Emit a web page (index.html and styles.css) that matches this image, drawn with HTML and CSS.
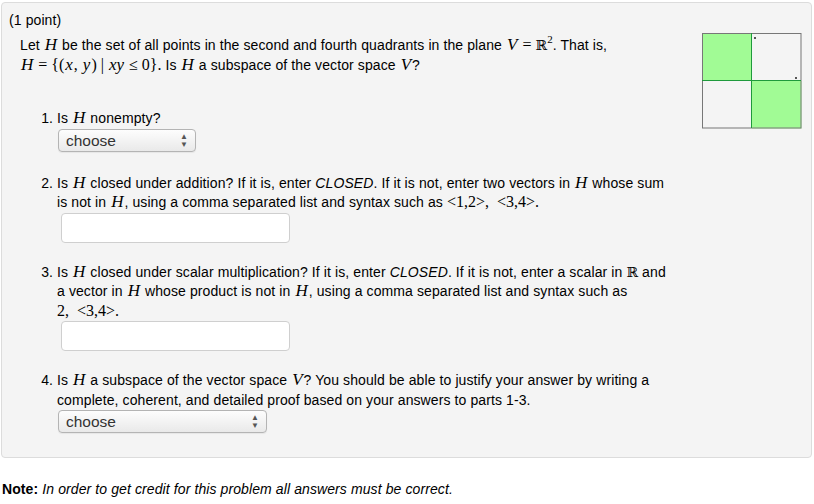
FILE: index.html
```html
<!DOCTYPE html>
<html>
<head>
<meta charset="utf-8">
<link rel="stylesheet" href="styles.css">
</head>
<body>
<div class="problem">
  <div class="points">(1 point)</div>
  <div class="intro">
    <svg class="graph" width="100" height="96" viewBox="0 0 100 96">
      <rect x="0.5" y="0.5" width="49" height="47" fill="#a1fb95"/>
      <rect x="50" y="48" width="49.5" height="47.5" fill="#a1fb95"/>
      <rect x="0.5" y="0.5" width="98.5" height="94.5" fill="none" stroke="#777" stroke-width="1"/>
      <line x1="49.5" y1="0" x2="49.5" y2="95" stroke="#1f9a3c" stroke-width="1"/>
      <line x1="0" y1="47.5" x2="99" y2="47.5" stroke="#1f9a3c" stroke-width="1"/>
      <rect x="52" y="4" width="2" height="2" fill="#555"/>
      <rect x="93" y="44" width="2" height="2" fill="#555"/>
    </svg>
    <p>Let <span class="m">H</span> be the set of all points in the second and fourth quadrants in the plane <span class="m">V</span> <span class="r">=</span> <span class="bb">ℝ</span><sup class="r">2</sup>. That is,<br>
    <span class="m">H</span> <span class="r">= {(</span><span class="m">x</span><span class="r">,</span> <span class="m">y</span><span class="r">) | </span><span class="m">xy</span> <span class="r">≤ 0}.</span> Is <span class="m">H</span> a subspace of the vector space <span class="m">V</span>?</p>
  </div>
  <ol class="parts">
    <li>Is <span class="m">H</span> nonempty?<br>
      <div class="select"><span class="sel-text">choose</span><span class="arrows">▲<br>▼</span></div>
    </li>
    <li>Is <span class="m">H</span> closed under addition? If it is, enter <i>CLOSED</i>. If it is not, enter two vectors in <span class="m">H</span> whose sum<br>is not in <span class="m">H</span>, using a comma separated list and syntax such as <span class="r">&lt;1,2&gt;,&nbsp; &lt;3,4&gt;.</span><br>
      <div class="input"></div>
    </li>
    <li>Is <span class="m">H</span> closed under scalar multiplication? If it is, enter <i>CLOSED</i>. If it is not, enter a scalar in <span class="bb">ℝ</span> and<br>a vector in <span class="m">H</span> whose product is not in <span class="m">H</span>, using a comma separated list and syntax such as<br><span class="r">2,&nbsp; &lt;3,4&gt;.</span><br>
      <div class="input"></div>
    </li>
    <li>Is <span class="m">H</span> a subspace of the vector space <span class="m">V</span>? You should be able to justify your answer by writing a<br>complete, coherent, and detailed proof based on your answers to parts 1-3.<br>
      <div class="select wide"><span class="sel-text">choose</span><span class="arrows">▲<br>▼</span></div>
    </li>
  </ol>
</div>
<p class="note"><b>Note:</b> <i>In order to get credit for this problem all answers must be correct.</i></p>
</body>
</html>
```
FILE: styles.css
```css
html, body {
  margin: 0;
  padding: 0;
  background: #fff;
}
body {
  font-family: "Liberation Sans", Arial, sans-serif;
  font-size: 14px;
  color: #000;
  padding: 2px 2px 0 1px;
  letter-spacing: 0.1px;
}
.problem {
  background: #f4f4f4;
  border: 1px solid #dcdcdc;
  border-radius: 4px;
  padding: 8px 7px 22px 7px;
  height: 424px;
}
.points {
  line-height: 19px;
}
.intro {
  margin-left: 11px;
}
.intro p {
  margin: 6px 0 0 0;
  line-height: 19.5px;
}
.graph {
  float: right;
  margin: -3px 2px 0 0;
  display: block;
}
.m {
  font-family: "Liberation Serif", "DejaVu Serif", serif;
  font-style: italic;
  font-size: 17px;
  line-height: 1;
  padding: 0 1px;
  letter-spacing: 0;
}
.r {
  font-family: "Liberation Serif", "DejaVu Serif", serif;
  font-size: 16px;
  line-height: 1;
  letter-spacing: 0;
}
sup.r {
  font-size: 11px;
  vertical-align: 7px;
  line-height: 0;
}
.bb {
  font-family: "DejaVu Serif", serif;
  font-size: 14px;
  line-height: 1;
}
.parts {
  margin: 34px 0 0 0;
  padding-left: 48px;
  line-height: 19.5px;
}
.parts li {
  margin-bottom: 20px;
  padding-right: 80px;
}
.parts li:first-child {
  margin-bottom: 22px;
}
.select {
  position: relative;
  width: 136px;
  height: 21px;
  border: 1px solid #b4b4b4;
  border-radius: 4px;
  background: linear-gradient(#fdfdfd, #e9e9e9);
  margin-left: 1px;
  box-shadow: 0 1px 1px rgba(0,0,0,0.06);
}
.select.wide {
  width: 207px;
}
.sel-text {
  position: absolute;
  left: 7px;
  top: 1px;
  font-size: 15.5px;
  line-height: 20px;
  color: #333;
  letter-spacing: 0;
}
.arrows {
  position: absolute;
  right: 7px;
  top: 3px;
  font-size: 8px;
  line-height: 8px;
  color: #555;
}
.input {
  width: 227px;
  height: 28px;
  background: #fff;
  border: 1px solid #cfcfcf;
  border-radius: 4px;
  margin: 0 0 0 4px;
}
.note {
  margin: 22px 0 0 1px;
  line-height: 19px;
}
```
